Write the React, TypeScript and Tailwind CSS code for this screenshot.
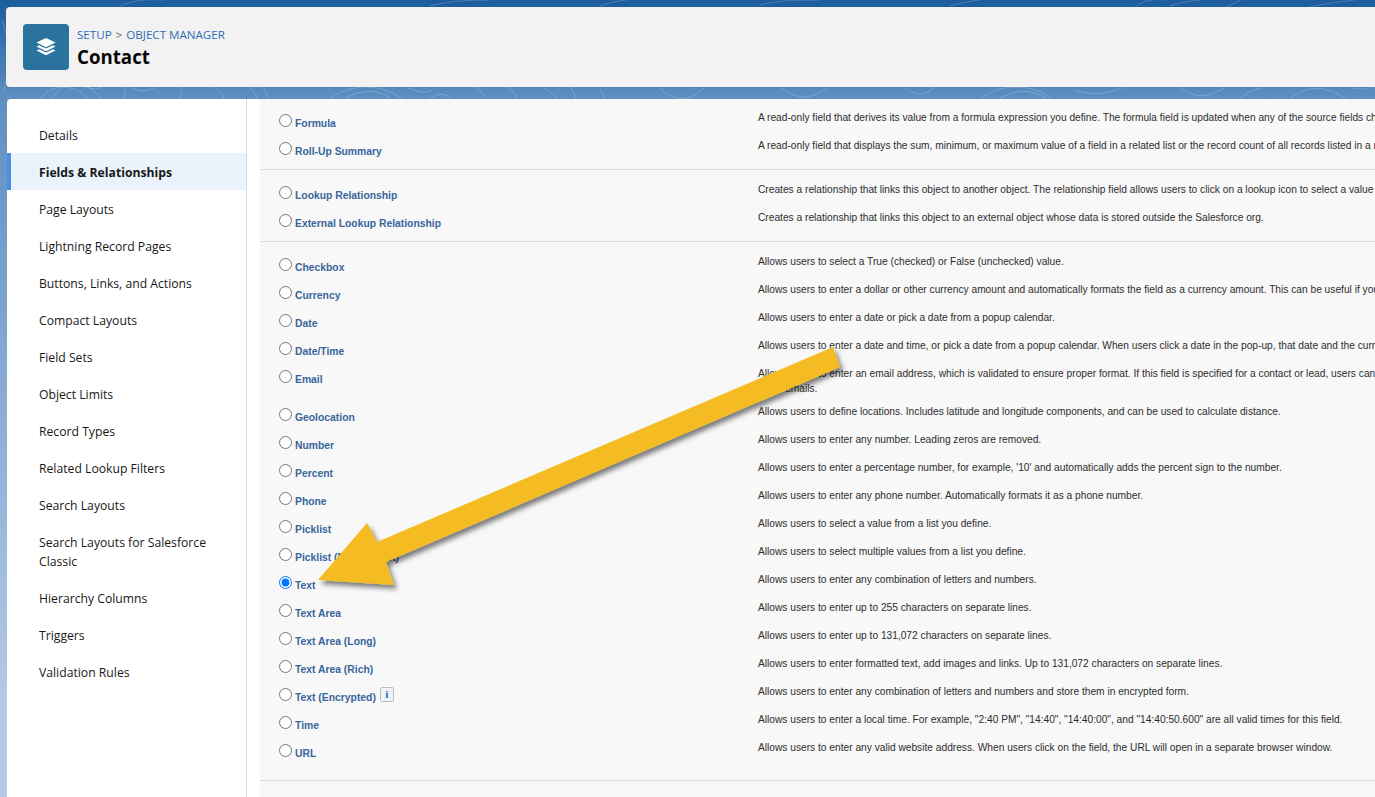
const NAV_ITEMS = [
  'Details',
  'Fields & Relationships',
  'Page Layouts',
  'Lightning Record Pages',
  'Buttons, Links, and Actions',
  'Compact Layouts',
  'Field Sets',
  'Object Limits',
  'Record Types',
  'Related Lookup Filters',
  'Search Layouts',
  'Search Layouts for Salesforce Classic',
  'Hierarchy Columns',
  'Triggers',
  'Validation Rules',
]

type FieldType = { label: string; desc: string; second?: string; checked?: boolean; info?: boolean }

const GROUPS: FieldType[][] = [
  [
    { label: 'Formula', desc: 'A read-only field that derives its value from a formula expression you define. The formula field is updated when any of the source fields change.' },
    { label: 'Roll-Up Summary', desc: 'A read-only field that displays the sum, minimum, or maximum value of a field in a related list or the record count of all records listed in a related list.' },
  ],
  [
    { label: 'Lookup Relationship', desc: 'Creates a relationship that links this object to another object. The relationship field allows users to click on a lookup icon to select a value from a popup list.' },
    { label: 'External Lookup Relationship', desc: 'Creates a relationship that links this object to an external object whose data is stored outside the Salesforce org.' },
  ],
  [
    { label: 'Checkbox', desc: 'Allows users to select a True (checked) or False (unchecked) value.' },
    { label: 'Currency', desc: 'Allows users to enter a dollar or other currency amount and automatically formats the field as a currency amount. This can be useful if you export data.' },
    { label: 'Date', desc: 'Allows users to enter a date or pick a date from a popup calendar.' },
    { label: 'Date/Time', desc: 'Allows users to enter a date and time, or pick a date from a popup calendar. When users click a date in the pop-up, that date and the current time are entered.' },
    { label: 'Email', desc: 'Allows users to enter an email address, which is validated to ensure proper format. If this field is specified for a contact or lead, users can choose the address when clicking Send an Email.', second: 'mass emails.' },
    { label: 'Geolocation', desc: 'Allows users to define locations. Includes latitude and longitude components, and can be used to calculate distance.' },
    { label: 'Number', desc: 'Allows users to enter any number. Leading zeros are removed.' },
    { label: 'Percent', desc: "Allows users to enter a percentage number, for example, '10' and automatically adds the percent sign to the number." },
    { label: 'Phone', desc: 'Allows users to enter any phone number. Automatically formats it as a phone number.' },
    { label: 'Picklist', desc: 'Allows users to select a value from a list you define.' },
    { label: 'Picklist (Multi-Select)', desc: 'Allows users to select multiple values from a list you define.' },
    { label: 'Text', desc: 'Allows users to enter any combination of letters and numbers.', checked: true },
    { label: 'Text Area', desc: 'Allows users to enter up to 255 characters on separate lines.' },
    { label: 'Text Area (Long)', desc: 'Allows users to enter up to 131,072 characters on separate lines.' },
    { label: 'Text Area (Rich)', desc: 'Allows users to enter formatted text, add images and links. Up to 131,072 characters on separate lines.' },
    { label: 'Text (Encrypted)', desc: 'Allows users to enter any combination of letters and numbers and store them in encrypted form.', info: true },
    { label: 'Time', desc: 'Allows users to enter a local time. For example, "2:40 PM", "14:40", "14:40:00", and "14:40:50.600" are all valid times for this field.' },
    { label: 'URL', desc: 'Allows users to enter any valid website address. When users click on the field, the URL will open in a separate browser window.' },
  ],
]

// Faint contour lines in the blue banner
function BannerPattern() {
  return (
    <svg className="absolute inset-0 w-full h-[100px]" viewBox="0 0 1375 100" fill="none" stroke="#ffffff" strokeOpacity="0.2" strokeWidth="1">
      <path d="M2 20c8 20 8 50 2 70M12 82c8 6 16 6 26 1M40 99c10-12 20-14 34-10 8 3 12 8 14 11" />
      <path d="M52 99c12-20 34-20 50 0M84 86c6 3 12 4 18 1M122 99c4-6 4-10 2-14M132 88c8 4 14 4 22 0" />
      <path d="M180 99c2-6 2-10 0-14M214 86c6 6 10 10 10 14M246 84c6 5 10 10 12 16M262 86c4 5 5 9 5 14" />
      <path d="M330 99c20-16 52-16 72 0M345 99c14-10 34-10 46 0M408 88c10 4 18 6 24 2M430 99c6-6 14-6 20-2" />
      <path d="M470 84c10 6 14 10 16 15M506 86c8 5 10 9 12 14M545 88c8 8 12 10 14 12M567 84c6 6 8 10 8 16" />
      <path d="M600 90c4 4 4 8 4 10M660 88c14 14 30 14 44 0M782 88c14 12 30 12 44 0M905 88c10 8 20 8 30-1" />
      <path d="M980 99c20-16 52-16 72 0M1000 99c14-10 34-10 46 0M1075 90c16 6 30 4 46-2M1180 88c14 10 28 10 44 0" />
      <path d="M1240 99c6-6 14-10 22-11M1290 99c16-14 36-14 56 0M1352 88c8 2 16 1 24-2" />
      <path d="M1135 7c10-8 20-8 30-7M1170 6c12-4 20-5 30-6M1225 7c8-3 12-5 16-7M1310 7c16-4 30-5 44-7" />
      <path d="M120 6c14-6 30-7 44-6M430 6c20-5 36-6 60-6M760 5c18-5 40-5 60-5M600 6c8-3 16-5 26-6M950 6c10-3 20-5 30-6" />
    </svg>
  )
}

function FieldRow({ field }: { field: FieldType }) {
  return (
    <div className={`flex items-start ${field.second ? 'h-[38px]' : 'h-[28px]'}`}>
      <div className="w-[498px] shrink-0 flex items-start pl-[19px]">
        <input type="radio" name="fieldType" defaultChecked={field.checked} className="m-0 mt-[1px] w-[13px] h-[13px] shrink-0" />
        <span className="ml-[3px] mt-[5px] text-[10.35px] leading-[12px] font-bold text-[#38659b]">{field.label}</span>
        {field.info && (
          <span className="ml-[4px] w-[14px] h-[15px] flex items-center justify-center rounded-[2px] border border-[#b9bfc6] bg-[#f1f3f5] text-[11px] leading-none font-bold text-[#1a6ed0] font-['Liberation_Serif',serif]">
            i
          </span>
        )}
      </div>
      <div className="whitespace-nowrap text-[#2d2d2d] text-[10.2px] leading-[12px] -mt-[1px]">
        <div>{field.desc}</div>
        {field.second && <div className="mt-[3px]">{field.second}</div>}
      </div>
    </div>
  )
}

export default function App() {
  return (
    <div className="relative w-[1375px] h-[797px] overflow-hidden bg-[linear-gradient(#1b5d9f_0px,#6090c2_100px,#b3c9e7_700px)] font-['Liberation_Sans',Arial,sans-serif]">
      <BannerPattern />
      <div className="relative flex flex-col h-full pl-[6px] pt-[7px]">
        <header className="w-[1400px] h-[80px] shrink-0 rounded-[4px] bg-[#f3f2f2] shadow-[0_0_1px_rgba(0,0,0,0.3)] flex items-center pl-[17px]">
          <div className="w-[46px] h-[46px] rounded-[4px] bg-[#2a739f] flex items-center justify-center">
            <svg width="20" height="20" viewBox="0 0 20 20" fill="#ffffff">
              <path d="M10 1 19.5 5.6 10 10.2.5 5.6z" />
              <path d="M3 8.2 10 11.6 17 8.2 19.5 9.6 10 14.2.5 9.6z" />
              <path d="M3 12.2 10 15.6 17 12.2 19.5 13.6 10 18.2.5 13.6z" />
            </svg>
          </div>
          <div className="ml-[8px] pt-[3px] font-['Open_Sans','Noto_Sans',sans-serif]">
            <div className="text-[11.6px] leading-[16px] text-[#2f6db5]">
              SETUP <span className="text-[#5f5f5f] mx-[1px]">&gt;</span> OBJECT MANAGER
            </div>
            <div className="text-[18.7px] leading-[26px] font-bold text-[#080707] mt-[1px]">Contact</div>
          </div>
        </header>

        <main className="w-[1400px] flex-1 mt-[12px] ml-[1px] flex bg-white rounded-t-[4px]">
          <nav className="w-[240px] shrink-0 pt-[17px] border-r border-[#d8d8d8] font-['Open_Sans','Noto_Sans',sans-serif] text-[12.2px] leading-[19px] text-[#181818]">
            {NAV_ITEMS.map(item => (
              <div
                key={item}
                className={`pt-[10px] pb-[8px] pr-[10px] ${
                  item === 'Fields & Relationships'
                    ? 'bg-[#eaf3fc] border-l-4 border-[#4a90e2] pl-[28px] font-bold'
                    : 'pl-[32px]'
                }`}
              >
                {item}
              </div>
            ))}
          </nav>
          <section className="ml-[13px] flex-1 bg-[#f8f8f8] overflow-hidden">
            <div className="pt-[14px]">
              {GROUPS.map((group, i) => (
                <div
                  key={i}
                  className={`border-b border-[#d9d9d9] ${i > 0 ? 'pt-[15px]' : ''} ${i === 2 ? 'pb-[9px]' : ''}`}
                >
                  {group.map(field => (
                    <FieldRow key={field.label} field={field} />
                  ))}
                </div>
              ))}
            </div>
          </section>
        </main>
      </div>

      {/* Annotation arrow laid over the page */}
      <svg className="absolute inset-0 pointer-events-none" width="1375" height="797" viewBox="0 0 1375 797">
        <defs>
          <filter id="arrowShadow" x="-10%" y="-10%" width="120%" height="130%">
            <feDropShadow dx="3" dy="4" stdDeviation="2.5" floodColor="#000000" floodOpacity="0.5" />
          </filter>
        </defs>
        <polygon
          points="833,347 840,367 386,562 394,585 318,580 367,523 377,542"
          fill="#f5bb20"
          filter="url(#arrowShadow)"
        />
      </svg>
    </div>
  )
}
